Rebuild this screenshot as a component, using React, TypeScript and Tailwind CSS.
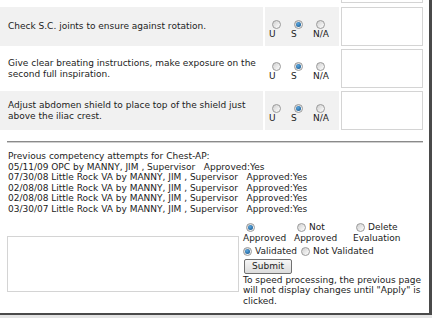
import type { ReactNode } from 'react'

const font = '[font-family:"DejaVu_Sans",Verdana,sans-serif]'

function Radio({ checked = false }: { checked?: boolean }) {
  return (
    <span className="inline-flex h-[9px] w-[9px] shrink-0 items-center justify-center rounded-full border border-[#9a9a9a] bg-[linear-gradient(135deg,#cfcfcf,#ffffff)]">
      {checked ? <span className="h-[5px] w-[5px] rounded-full bg-[radial-gradient(circle_at_40%_35%,#5aa7e0,#0f4f86)]" /> : null}
    </span>
  )
}

const rows = [
  { text: 'Check S.C. joints to ensure against rotation.', shaded: true },
  { text: 'Give clear breating instructions, make exposure on the second full inspiration.', shaded: false },
  { text: 'Adjust abdomen shield to place top of the shield just above the iliac crest.', shaded: true },
]

const attempts = [
  '05/11/09 OPC by MANNY, JIM , Supervisor',
  '07/30/08 Little Rock VA by MANNY, JIM , Supervisor',
  '02/08/08 Little Rock VA by MANNY, JIM , Supervisor',
  '02/08/08 Little Rock VA by MANNY, JIM , Supervisor',
  '03/30/07 Little Rock VA by MANNY, JIM , Supervisor',
]

function RatingCell({ label, checked }: { label: string; checked?: boolean }) {
  return (
    <div className="flex w-[22px] flex-col">
      <span className="ml-[3px] flex h-[10px] items-center">
        <Radio checked={checked} />
      </span>
      <span className="leading-[10px]">{label}</span>
    </div>
  )
}

function StatusCell({ first, second, checked, width }: { first: ReactNode; second: string; checked?: boolean; width: string }) {
  return (
    <div className={`flex flex-col ${width}`}>
      <span className="flex h-[11px] items-center gap-[3px]">
        <span className="ml-[3px] flex">
          <Radio checked={checked} />
        </span>
        {first}
      </span>
      <span className="leading-[11px]">{second}</span>
    </div>
  )
}

export default function App() {
  return (
    <div className={`h-[318px] w-[435px] overflow-hidden bg-white text-[9px] text-[#1c1c1c] ${font}`}>
      <div className="h-[315px] w-[432px] border-b-2 border-r-[3px] border-[#4a4a4a]">
        <div className="ml-[341px] h-[3px] w-[82px] border-x border-b border-[#d4d4d4]" />

        <div className="mt-[4px] flex flex-col gap-[3px]">
          {rows.map((row) => (
            <div className="flex h-[39px] gap-[2px]" key={row.text}>
              <div className={`flex w-[263px] items-center pl-[8px] pr-[6px] leading-[10.5px] ${row.shaded ? 'bg-[#f1f1f1]' : ''}`}>
                {row.text}
              </div>
              <div className={`flex w-[74px] items-center pl-[4px] pt-[5px] ${row.shaded ? 'bg-[#f1f1f1]' : ''}`}>
                <RatingCell label="U" />
                <RatingCell label="S" checked />
                <RatingCell label="N/A" />
              </div>
              <div className="w-[82px] border border-[#d4d4d4] bg-white" />
            </div>
          ))}
        </div>

        <div className="ml-[7px] mt-[11px] h-[2px] w-[416px] border-t border-b border-t-[#8a8a8a] border-b-[#cfcfcf]" />

        <div className="mt-[8px] pl-[8px] leading-[10.5px]">
          <div>Previous competency attempts for Chest-AP:</div>
          {attempts.map((line, i) => (
            <div className="whitespace-pre" key={i}>
              {line}   Approved:Yes
            </div>
          ))}
        </div>

        <div className="mt-[8px] flex items-center">
          <div className="ml-[7px] h-[56px] w-[232px] border border-[#d4d4d4] bg-white" />
          <div className="ml-[4px] flex flex-col">
            <div className="flex">
              <StatusCell checked first={null} second="Approved" width="w-[51px]" />
              <StatusCell first="Not" second="Approved" width="w-[59px]" />
              <StatusCell first="Delete" second="Evaluation" width="w-[60px]" />
            </div>
            <div className="mt-[2px] flex h-[11px] items-center">
              <span className="flex">
                <Radio checked />
              </span>
              <span className="ml-[3px]">Validated</span>
              <span className="ml-[4px] flex">
                <Radio />
              </span>
              <span className="ml-[3px]">Not Validated</span>
            </div>
            <button
              className="ml-[1px] mt-[2px] h-[15px] w-[48px] rounded-[2px] border border-[#707070] bg-[linear-gradient(#f6f6f6,#dcdcdc)] text-[9px] leading-[13px] text-[#1c1c1c]"
              type="button"
            >
              Submit
            </button>
            <div className="mt-[1px] w-[182px] leading-[10.3px]">
              To speed processing, the previous page will not display changes until "Apply" is clicked.
            </div>
          </div>
        </div>
      </div>
      <div className="h-[3px] w-[432px] bg-[#e4e4e4]" />
    </div>
  )
}
